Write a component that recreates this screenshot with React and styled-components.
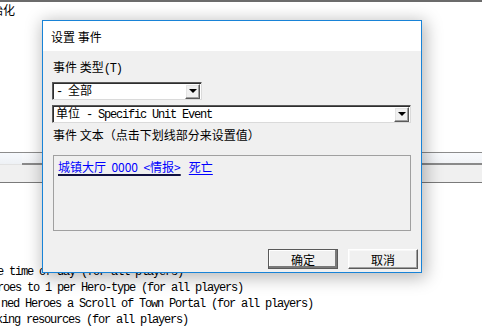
import React from 'react'
import styled, { createGlobalStyle } from 'styled-components'

const GlobalStyle = createGlobalStyle`
  html, body {
    margin: 0;
    padding: 0;
    background: #ffffff;
  }
  body {
    font-family: "Noto Sans CJK SC", "Noto Sans", sans-serif;
    font-size: 12px;
    color: #000;
  }
`

const Screen = styled.div`
  position: relative;
  width: 482px;
  height: 328px;
  overflow: hidden;
  background: #fff;
  border-top: 2px solid #6b6b6b;
  box-sizing: border-box;
`

const Caption = styled.div`
  height: 14px;
  line-height: 14px;
  margin-top: 1px;
  white-space: nowrap;
  text-indent: -9px;
`

const Band = styled.div`
  margin-top: 135px;
  height: 29px;
  border-top: 1px solid #8c8c8c;
  border-bottom: 1px solid #7a7a7a;
  background: #f0f0f0;
`

const BandStrip = styled.div`
  display: flex;
  height: 12px;
`

const BandStub = styled.div`
  width: 22px;
  background: linear-gradient(#f6f9fd, #eef1f5);
  border-bottom: 1px solid #e2e2e2;
`

const BandRail = styled.div`
  flex: 1;
  background: linear-gradient(#f8fafd, #f1f3f6);
  border-bottom: 2px solid #8a8a8a;
`

const Log = styled.div`
  margin-top: 81px;
  font-family: "Liberation Mono", monospace;
  font-size: 12px;
  letter-spacing: -1.2px;
  line-height: 16px;
  white-space: nowrap;
`

const LogLine = styled.div`
  margin-left: ${p => p.$shift}px;
`

const Dialog = styled.div`
  position: absolute;
  left: 42px;
  top: 18px;
  width: 380px;
  height: 253px;
  box-sizing: border-box;
  border: 1px solid #1883d7;
  background: #f0f0f0;
  box-shadow: 2px 3px 16px 2px rgba(0, 0, 0, 0.28);
  display: flex;
  flex-direction: column;
`

const TitleBar = styled.div`
  height: 30px;
  background: #fff;
  padding-left: 8px;
  display: flex;
  align-items: center;
  font-size: 12px;
`

const Body = styled.div`
  flex: 1;
  display: flex;
  flex-direction: column;
  padding: 9px 3px 0 9px;
`

const Label = styled.div`
  height: 14px;
  line-height: 14px;
  margin-top: ${p => p.$gap || 0}px;
  padding-left: 1px;
  white-space: nowrap;
`

const Mono = styled.span`
  font-family: "Liberation Mono", monospace;
  letter-spacing: -1.2px;
`

const Combo = styled.div`
  width: ${p => p.$width}px;
  height: 18px;
  margin-top: ${p => p.$gap}px;
  box-sizing: border-box;
  border: 1px solid;
  border-color: #5a5a5a #dadada #dadada #5a5a5a;
  box-shadow: inset 1px 1px 0 #2e2e2e;
  background: #fff;
  display: flex;
  align-items: center;
  padding: 0 1px 0 3px;
`

const ComboText = styled.div`
  flex: 1;
  line-height: 14px;
  white-space: pre;
  overflow: hidden;
`

const DropButton = styled.div`
  width: 15px;
  height: 15px;
  box-sizing: border-box;
  background: #f0f0f0;
  border: 1px solid;
  border-color: #ffffff #5a5a5a #5a5a5a #ffffff;
  box-shadow: inset -1px -1px 0 #a0a0a0, inset 1px 1px 0 #e3e3e3;
  display: flex;
  align-items: center;
  justify-content: center;
`

const Arrow = styled.span`
  width: 0;
  height: 0;
  border-left: 4px solid transparent;
  border-right: 4px solid transparent;
  border-top: 4px solid #000;
`

const TextPanel = styled.div`
  width: 358px;
  height: 76px;
  margin: 13px 0 0 1px;
  box-sizing: border-box;
  border: 1px solid #a0a0a0;
  padding: 3px 4px;
  line-height: 16px;
  white-space: pre;
`

const Link = styled.a`
  color: #0000ff;
  text-decoration: underline;
  text-decoration-color: ${p => (p.$focused ? '#101040' : '#0000ff')};
  text-decoration-thickness: ${p => (p.$focused ? 2 : 1)}px;
  text-underline-offset: 2px;
  cursor: pointer;
`

const Actions = styled.div`
  display: flex;
  justify-content: flex-end;
  gap: 10px;
  margin-top: 18px;
`

const Button = styled.button`
  width: 70px;
  height: 20px;
  box-sizing: border-box;
  padding: 0;
  font-family: "Noto Sans CJK SC", sans-serif;
  font-size: 12px;
  color: #000;
  background: #f0f0f0;
  border: 1px solid;
  border-color: ${p => (p.$primary ? '#5a5a5a' : '#ffffff #5a5a5a #5a5a5a #ffffff')};
  box-shadow: ${p =>
    p.$primary
      ? 'inset -2px -2px 0 #7a7a7a, inset 1px 1px 0 #ffffff'
      : 'inset -1px -1px 0 #a0a0a0, inset 1px 1px 0 #f8f8f8'};
`

const logLines = [
  { shift: -3, text: 'e time of day (for all players)' },
  { shift: -3, text: 'roes to 1 per Hero-type (for all players)' },
  { shift: 1, text: 'ned Heroes a Scroll of Town Portal (for all players)' },
  { shift: -4, text: 'king resources (for all players)' },
]

export default function App() {
  return (
    <>
      <GlobalStyle />
      <Screen>
        <Caption>始化</Caption>
        <Band>
          <BandStrip>
            <BandStub />
            <BandRail />
          </BandStrip>
        </Band>
        <Log>
          {logLines.map(line => (
            <LogLine key={line.text} $shift={line.shift}>{line.text}</LogLine>
          ))}
        </Log>

        <Dialog>
          <TitleBar>设置 事件</TitleBar>
          <Body>
            <Label>事件 类型<Mono>(T)</Mono></Label>
            <Combo $width={150} $gap={8}>
              <ComboText><Mono>- </Mono>全部</ComboText>
              <DropButton><Arrow /></DropButton>
            </Combo>
            <Combo $width={359} $gap={5}>
              <ComboText>单位<Mono> - Specific Unit Event</Mono></ComboText>
              <DropButton><Arrow /></DropButton>
            </Combo>
            <Label $gap={5}>事件 文本（点击下划线部分来设置值）</Label>
            <TextPanel>
              <Link $focused>城镇大厅  0000  &lt;情报&gt;</Link>{'   '}
              <Link>死亡</Link>
            </TextPanel>
            <Actions>
              <Button $primary>确定</Button>
              <Button>取消</Button>
            </Actions>
          </Body>
        </Dialog>
      </Screen>
    </>
  )
}
